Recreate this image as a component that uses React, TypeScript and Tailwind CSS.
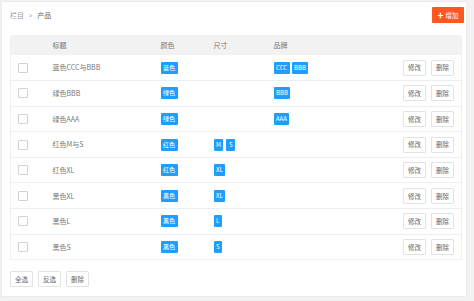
const rows = [
  { title: '蓝色CCC与BBB', color: '蓝色', sizes: [], brands: ['CCC', 'BBB'] },
  { title: '绿色BBB', color: '绿色', sizes: [], brands: ['BBB'] },
  { title: '绿色AAA', color: '绿色', sizes: [], brands: ['AAA'] },
  { title: '红色M与S', color: '红色', sizes: ['M', 'S'], brands: [] },
  { title: '红色XL', color: '红色', sizes: ['XL'], brands: [] },
  { title: '黑色XL', color: '黑色', sizes: ['XL'], brands: [] },
  { title: '黑色L', color: '黑色', sizes: ['L'], brands: [] },
  { title: '黑色S', color: '黑色', sizes: ['S'], brands: [] },
]

const Tag = ({ text }: { text: string }) => (
  <span className="inline-flex h-[12px] items-center rounded-[1px] bg-[#1e9fff] px-[2.5px] text-[6px] leading-none text-white">
    {text}
  </span>
)

const Btn = ({ text }: { text: string }) => (
  <button className="flex h-[16px] w-[23px] items-center justify-center rounded-[1px] border border-[#e2e2e2] bg-white text-[6.5px] leading-none text-[#666]">
    {text}
  </button>
)

const Check = () => <div className="h-[10px] w-[10px] rounded-[1px] border border-[#d2d2d2] bg-white" />

export default function App() {
  return (
    <div
      className="h-[301px] w-[474px] overflow-hidden bg-[#f2f2f2] pl-[1px] pr-[7px] pt-[1px]"
      style={{ fontFamily: '"Noto Sans CJK SC", "Liberation Sans", sans-serif' }}
    >
      <div className="h-[296px] border border-[#ececec] bg-white pl-[8px] pr-[2px]">
        <header className="flex h-[33px] items-start justify-between pt-[5px]">
          <div className="mt-[3px] flex items-center gap-[5px] text-[7px] text-[#999]">
            <span>栏目</span>
            <span className="text-[6px]">&gt;</span>
            <span className="text-[#666]">产品</span>
          </div>
          <button className="flex h-[16px] w-[32px] items-center justify-center gap-[2px] rounded-[1px] bg-[#ff5722] text-[6.5px] leading-none text-white">
            <span className="text-[10px] font-bold leading-none">+</span>
            <span>增加</span>
          </button>
        </header>

        <table className="w-[452px] table-fixed border-collapse border-x border-[#eeeeee] text-[7px] text-[#777]">
          <colgroup>
            <col className="w-[32px]" />
            <col className="w-[108px]" />
            <col className="w-[53px]" />
            <col className="w-[60px]" />
            <col />
            <col className="w-[66px]" />
          </colgroup>
          <thead>
            <tr className="h-[20px] bg-[#f2f2f2] text-left">
              <th className="font-normal" />
              <th className="pl-[10px] font-normal">标题</th>
              <th className="pl-[10px] font-normal">颜色</th>
              <th className="pl-[10px] font-normal">尺寸</th>
              <th className="pl-[10px] font-normal">品牌</th>
              <th className="font-normal" />
            </tr>
          </thead>
          <tbody>
            {rows.map((r) => (
              <tr key={r.title} className="h-[25.6px] border-b border-[#eeeeee]">
                <td>
                  <div className="flex pl-[7px]">
                    <Check />
                  </div>
                </td>
                <td className="pl-[10px]">{r.title}</td>
                <td className="pl-[10px]">
                  <Tag text={r.color} />
                </td>
                <td className="pl-[10px]">
                  <div className="flex gap-[3px]">
                    {r.sizes.map((s) => (
                      <Tag key={s} text={s} />
                    ))}
                  </div>
                </td>
                <td className="pl-[10px]">
                  <div className="flex gap-[2px]">
                    {r.brands.map((b) => (
                      <Tag key={b} text={b} />
                    ))}
                  </div>
                </td>
                <td>
                  <div className="flex justify-end gap-[5px] pr-[7px]">
                    <Btn text="修改" />
                    <Btn text="删除" />
                  </div>
                </td>
              </tr>
            ))}
          </tbody>
        </table>

        <div className="mt-[11px] flex gap-[5px]">
          <Btn text="全选" />
          <Btn text="反选" />
          <Btn text="删除" />
        </div>
      </div>
    </div>
  )
}
